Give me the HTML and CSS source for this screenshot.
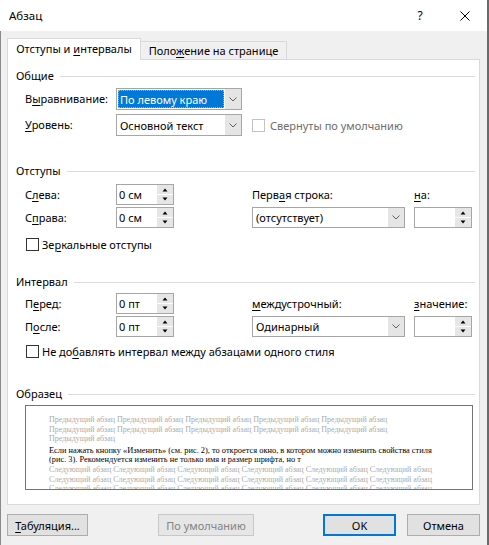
FILE: index.html
```html
<!DOCTYPE html>
<html lang="ru">
<head>
<meta charset="utf-8">
<title>Абзац</title>
<link rel="stylesheet" href="styles.css">
</head>
<body>
<div class="window">
  <div class="titlebar">
    <span class="title">Абзац</span>
    <span class="cap help">?</span>
    <span class="cap close"><svg width="10" height="10" viewBox="0 0 10 10"><path d="M0.5 0.5 L9.5 9.5 M9.5 0.5 L0.5 9.5" stroke="#000" stroke-width="1" fill="none"/></svg></span>
  </div>
  <div class="main">
    <div class="tabs">
      <div class="tab active"><span>Отступы и <u>и</u>нтервалы</span></div>
      <div class="tab"><span>Поло<u>ж</u>ение на странице</span></div>
    </div>
    <div class="panel">
      <div class="group-title"><span>Общие</span><i class="rule"></i></div>
      <div class="grid general">
        <span class="lbl">В<u>ы</u>равнивание:</span>
        <div class="combo w126"><span class="ctext sel">По левому краю</span><span class="carrow"><svg width="8" height="5" viewBox="0 0 8 5"><path d="M0.5 0.5 L4 4 L7.5 0.5" stroke="#606060" fill="none"/></svg></span></div>
        <span></span>
        <span class="lbl"><u>У</u>ровень:</span>
        <div class="combo w126"><span class="ctext">Основной текст</span><span class="carrow"><svg width="8" height="5" viewBox="0 0 8 5"><path d="M0.5 0.5 L4 4 L7.5 0.5" stroke="#606060" fill="none"/></svg></span></div>
        <label class="check disabled"><span class="box"></span><span>Свернуты по умолчанию</span></label>
      </div>

      <div class="group-title gap27"><span>Отступы</span><i class="rule"></i></div>
      <div class="grid indents">
        <span class="lbl">С<u>л</u>ева:</span>
        <div class="spin"><span class="val">0 см</span><svg class="sbtn" width="16" height="19" viewBox="0 0 16 19"><rect x="0" y="0" width="16" height="9" fill="#e6e6e6"/><rect x="0" y="10" width="16" height="9" fill="#e6e6e6"/><path d="M5.5 6.5 L8 3.5 L10.5 6.5 Z" fill="#000"/><path d="M5.5 12.5 L10.5 12.5 L8 15.5 Z" fill="#000"/></svg></div>
        <span class="lbl">Перв<u>а</u>я строка:</span>
        <span class="lbl"><u>н</u>а:</span>
        <span class="lbl">С<u>п</u>рава:</span>
        <div class="spin"><span class="val">0 см</span><svg class="sbtn" width="16" height="19" viewBox="0 0 16 19"><rect x="0" y="0" width="16" height="9" fill="#e6e6e6"/><rect x="0" y="10" width="16" height="9" fill="#e6e6e6"/><path d="M5.5 6.5 L8 3.5 L10.5 6.5 Z" fill="#000"/><path d="M5.5 12.5 L10.5 12.5 L8 15.5 Z" fill="#000"/></svg></div>
        <div class="combo w153 h21"><span class="ctext">(отсутствует)</span><span class="carrow"><svg width="8" height="5" viewBox="0 0 8 5"><path d="M0.5 0.5 L4 4 L7.5 0.5" stroke="#606060" fill="none"/></svg></span></div>
        <div class="spin"><span class="val"></span><svg class="sbtn" width="16" height="19" viewBox="0 0 16 19"><rect x="0" y="0" width="16" height="9" fill="#e6e6e6"/><rect x="0" y="10" width="16" height="9" fill="#e6e6e6"/><path d="M5.5 6.5 L8 3.5 L10.5 6.5 Z" fill="#000"/><path d="M5.5 12.5 L10.5 12.5 L8 15.5 Z" fill="#000"/></svg></div>
      </div>
      <label class="check row-check mt8"><span class="box"></span><span>Зе<u>р</u>кальные отступы</span></label>

      <div class="group-title gap22"><span>Интервал</span><i class="rule"></i></div>
      <div class="grid spacing">
        <span class="lbl">П<u>е</u>ред:</span>
        <div class="spin"><span class="val">0 пт</span><svg class="sbtn" width="16" height="19" viewBox="0 0 16 19"><rect x="0" y="0" width="16" height="9" fill="#e6e6e6"/><rect x="0" y="10" width="16" height="9" fill="#e6e6e6"/><path d="M5.5 6.5 L8 3.5 L10.5 6.5 Z" fill="#000"/><path d="M5.5 12.5 L10.5 12.5 L8 15.5 Z" fill="#000"/></svg></div>
        <span class="lbl"><u>м</u>еждустрочный:</span>
        <span class="lbl"><u>з</u>начение:</span>
        <span class="lbl">П<u>о</u>сле:</span>
        <div class="spin"><span class="val">0 пт</span><svg class="sbtn" width="16" height="19" viewBox="0 0 16 19"><rect x="0" y="0" width="16" height="9" fill="#e6e6e6"/><rect x="0" y="10" width="16" height="9" fill="#e6e6e6"/><path d="M5.5 6.5 L8 3.5 L10.5 6.5 Z" fill="#000"/><path d="M5.5 12.5 L10.5 12.5 L8 15.5 Z" fill="#000"/></svg></div>
        <div class="combo w153 h21"><span class="ctext">Одинарный</span><span class="carrow"><svg width="8" height="5" viewBox="0 0 8 5"><path d="M0.5 0.5 L4 4 L7.5 0.5" stroke="#606060" fill="none"/></svg></span></div>
        <div class="spin"><span class="val"></span><svg class="sbtn" width="16" height="19" viewBox="0 0 16 19"><rect x="0" y="0" width="16" height="9" fill="#e6e6e6"/><rect x="0" y="10" width="16" height="9" fill="#e6e6e6"/><path d="M5.5 6.5 L8 3.5 L10.5 6.5 Z" fill="#000"/><path d="M5.5 12.5 L10.5 12.5 L8 15.5 Z" fill="#000"/></svg></div>
      </div>
      <label class="check row-check mt6"><span class="box"></span><span>Не до<u>б</u>авлять интервал между абзацами одного стиля</span></label>

      <div class="group-title gap27"><span>Образец</span><i class="rule"></i></div>
      <div class="preview">
        <div class="pline prev">Предыдущий абзац Предыдущий абзац Предыдущий абзац Предыдущий абзац Предыдущий абзац</div>
        <div class="pline prev">Предыдущий абзац Предыдущий абзац Предыдущий абзац Предыдущий абзац Предыдущий абзац</div>
        <div class="pline prev">Предыдущий абзац</div>
        <div class="cur">
          <div class="pline">Если нажать кнопку «Изменить» (см. рис. 2), то откроется окно, в котором можно изменить свойства стиля</div>
          <div class="pline">(рис. 3). Рекомендуется изменить не только имя и размер шрифта, но т</div>
        </div>
        <div class="next">
          <div class="pline prev">Следующий абзац Следующий абзац Следующий абзац Следующий абзац Следующий абзац Следующий абзац</div>
          <div class="pline prev">Следующий абзац Следующий абзац Следующий абзац Следующий абзац Следующий абзац Следующий абзац</div>
          <div class="pline prev">Следующий абзац Следующий абзац Следующий абзац Следующий абзац Следующий абзац Следующий абзац</div>
        </div>
      </div>
    </div>
    <div class="buttons">
      <button class="btn b-tabs"><u>Т</u>абуляция...</button>
      <button class="btn b-default" disabled>По умолчанию</button>
      <button class="btn b-ok">OK</button>
      <button class="btn b-cancel">Отмена</button>
    </div>
  </div>
</div>
</body>
</html>
```

FILE: styles.css
```css
html, body {
  margin: 0;
  padding: 0;
}
body {
  width: 489px;
  height: 545px;
  overflow: hidden;
  background: #f0f0f0;
  font-family: "Segoe UI", "Noto Sans", "Liberation Sans", sans-serif;
  font-size: 11px;
  color: #000;
}
u {
  text-decoration: underline;
  text-underline-offset: 2px;
}
.window {
  width: 489px;
  height: 545px;
  box-sizing: border-box;
  border-right: 2px solid #6a6a6a;
  display: flex;
  flex-direction: column;
  background: #f0f0f0;
}
.titlebar {
  height: 31px;
  flex: none;
  background: #fff;
  display: flex;
  align-items: center;
  padding-left: 9px;
}
.title {
  flex: 1;
  font-size: 11.5px;
}
.cap {
  height: 31px;
  display: flex;
  align-items: center;
  justify-content: center;
}
.help {
  width: 44px;
  font-size: 12px;
}
.close {
  width: 45px;
}
.main {
  flex: 1;
  border-left: 1px solid #8a8a8a;
  padding: 7px 7px 0 6px;
  display: flex;
  flex-direction: column;
}
.tabs {
  display: flex;
  align-items: flex-end;
  height: 22px;
  margin-bottom: -1px;
  position: relative;
  z-index: 1;
}
.tab {
  box-sizing: border-box;
  border: 1px solid #d9d9d9;
  border-bottom: none;
  display: flex;
  align-items: center;
  justify-content: center;
  white-space: nowrap;
}
.tab.active {
  width: 134px;
  height: 22px;
  background: #fff;
  padding-bottom: 2px;
}
.tab:not(.active) {
  width: 146px;
  height: 18px;
  margin-bottom: 1px;
  border-left: none;
  background: #f0f0f0;
}
.panel {
  flex: none;
  height: 446px;
  box-sizing: border-box;
  border: 1px solid #d9d9d9;
  background: #fff;
  padding: 8px 4px 0 8px;
  display: flex;
  flex-direction: column;
}
.group-title {
  height: 16px;
  line-height: 16px;
  display: flex;
  align-items: center;
}
.group-title .rule {
  flex: 1;
  height: 1px;
  background: #dcdcdc;
  margin-left: 6px;
  margin-top: 1px;
}
.gap27 { margin-top: 27px; }
.gap22 { margin-top: 22px; }
.grid {
  display: grid;
  margin-left: 9px;
  align-items: center;
}
.general {
  grid-template-columns: 91px 136px auto;
  grid-auto-rows: 22px;
  row-gap: 4px;
  margin-top: 4px;
}
.indents, .spacing {
  grid-template-columns: 91px 136px 162px 58px;
  grid-auto-rows: 21px;
  row-gap: 2px;
}
.indents { margin-top: 5px; }
.spacing { margin-top: 3px; }
.lbl {
  white-space: nowrap;
  line-height: 16px;
}
.combo {
  box-sizing: border-box;
  height: 22px;
  border: 1px solid #a6a6a6;
  background: #fff;
  display: flex;
}
.combo.h21 { height: 21px; }
.w126 { width: 126px; }
.w153 { width: 153px; }
.ctext {
  flex: 1;
  padding-left: 3px;
  display: flex;
  align-items: center;
  white-space: nowrap;
}
.ctext.sel {
  margin: 1px;
  padding-left: 2px;
  background: #0078d7;
  color: #fff;
  outline: 1px dotted #f39a2c;
  outline-offset: -1px;
}
.carrow {
  width: 16px;
  background: #e5e5e5;
  display: flex;
  align-items: center;
  justify-content: center;
}
.spin {
  box-sizing: border-box;
  width: 58px;
  height: 21px;
  border: 1px solid #a6a6a6;
  background: #fff;
  display: flex;
  align-items: center;
}
.val {
  flex: 1;
  padding-left: 2px;
  white-space: nowrap;
}
.sbtn {
  display: block;
  flex: none;
}
.check {
  display: flex;
  align-items: center;
  gap: 3px;
  height: 16px;
  white-space: nowrap;
}
.check .box {
  box-sizing: border-box;
  width: 13px;
  height: 13px;
  border: 1px solid #333;
  background: #fff;
  flex: none;
}
.check.disabled {
  color: #6d6d6d;
  gap: 5px;
}
.check.disabled .box {
  border-color: #c2c2c2;
}
.row-check {
  margin-left: 10px;
}
.mt8 { margin-top: 8px; }
.mt6 { margin-top: 6px; }
.preview {
  margin-top: 3px;
  margin-left: 9px;
  width: 448px;
  height: 85px;
  box-sizing: border-box;
  border: 1px solid #747474;
  background: #fff;
  overflow: hidden;
  padding: 9px 0 0 23px;
  font-family: "Liberation Serif", "Times New Roman", serif;
  font-size: 8px;
}
.pline {
  line-height: 9.5px;
  height: 9.5px;
  white-space: nowrap;
}
.prev { color: #ababab; }
.cur {
  margin-top: 2.5px;
  color: #000;
  font-size: 8.4px;
}
.cur .pline {
  line-height: 9.3px;
  height: 9.3px;
}
.next { margin-top: 0.5px; }
.buttons {
  margin-top: 9px;
  display: flex;
  height: 22px;
}
.btn {
  box-sizing: border-box;
  height: 22px;
  border: 1px solid #adadad;
  background: #e1e1e1;
  font-family: inherit;
  font-size: 11px;
  color: #000;
  padding: 0;
  margin: 0;
  white-space: nowrap;
}
.b-tabs { width: 81px; }
.b-default {
  width: 96px;
  margin-left: 70px;
  color: #838383;
  border-color: #c8c8c8;
  background: #e6e6e6;
}
.b-ok {
  width: 73px;
  margin-left: auto;
  border: 2px solid #0078d7;
}
.b-cancel {
  width: 73px;
  margin-left: 11px;
}
```
